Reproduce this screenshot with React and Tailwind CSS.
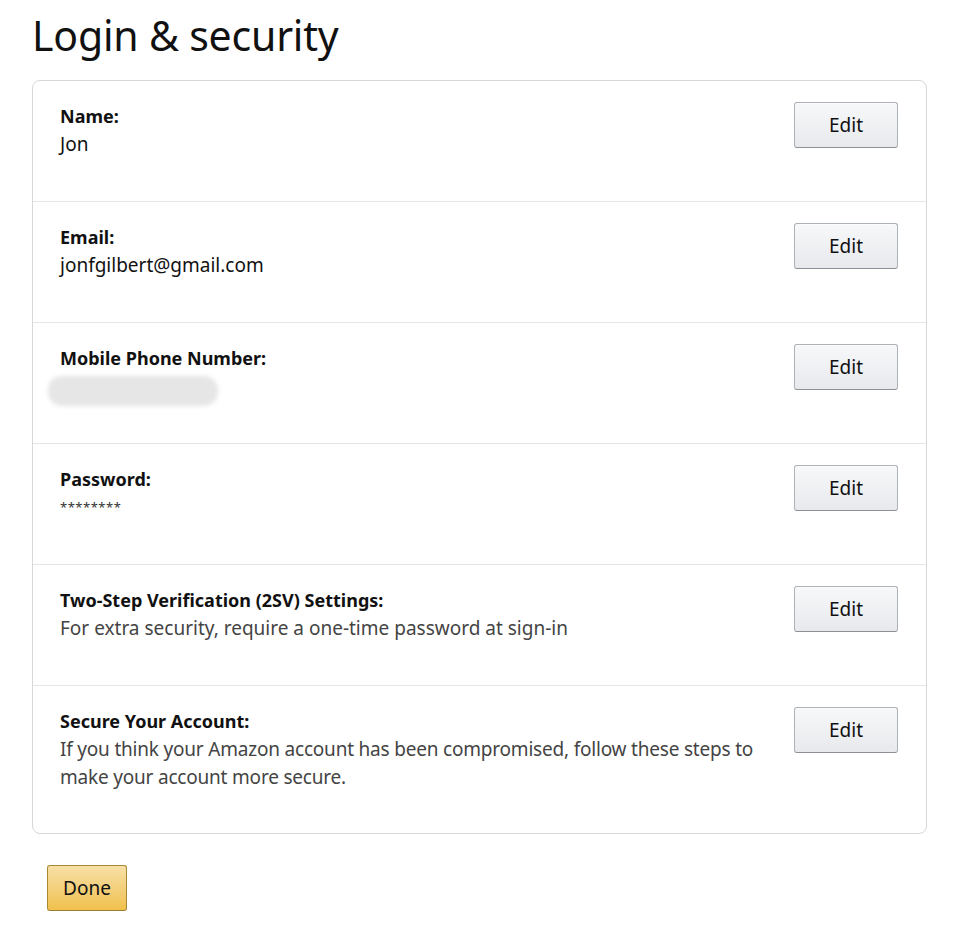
import React from "react";

const rows = [
  { label: "Name:", value: "Jon" },
  { label: "Email:", value: "jonfgilbert@gmail.com" },
  { label: "Mobile Phone Number:", blob: true },
  { label: "Password:", password: true },
  {
    label: "Two-Step Verification (2SV) Settings:",
    value: "For extra security, require a one-time password at sign-in",
    muted: true,
  },
  {
    label: "Secure Your Account:",
    value:
      "If you think your Amazon account has been compromised, follow these steps to make your account more secure.",
    muted: true,
    last: true,
  },
];

function EditButton() {
  return (
    <button className="shrink-0 w-[104px] h-[46px] rounded-[3px] border border-[#adb1b8] border-b-[#8d9096] bg-gradient-to-b from-[#f7f8fa] to-[#e7e9ec] text-[19px] text-[#111] shadow-[inset_0_1px_0_rgba(255,255,255,0.6)]">
      Edit
    </button>
  );
}

export default function App() {
  return (
    <div
      className="bg-white min-h-[939px] w-[960px] pl-[32px] pr-[33px] pt-[8px] text-[#111]"
      style={{ fontFamily: '"Noto Sans", "Open Sans", sans-serif' }}
    >
      <h1 className="text-[41px] leading-[54px] font-normal tracking-[-0.2px] mb-[18px]">
        Login &amp; security
      </h1>
      <div className="border border-[#d5d9d9] rounded-[8px]">
        {rows.map((r, i) => (
          <div
            key={i}
            className={
              "flex justify-between items-start pl-[27px] pr-[28px] pt-[21px] " +
              (r.last ? "pb-[42px] " : "pb-[43px] ") +
              (i > 0 ? "border-t border-[#e3e6e6]" : "")
            }
          >
            <div className="pr-[20px] max-w-[740px]">
              <div className="text-[18px] leading-[28px] font-bold">{r.label}</div>
              {r.value && (
                <div
                  className={
                    "text-[19px] leading-[28px] " +
                    (r.muted ? "text-[#444] " : "text-[#111] ") +
                    (r.last ? "tracking-[-0.2px]" : "")
                  }
                >
                  {r.value}
                </div>
              )}
              {r.blob && (
                <div className="h-[28px] relative">
                  <div className="absolute left-[-12px] top-[4px] w-[170px] h-[30px] rounded-[14px] bg-[#e6e6e6] blur-[2px]" />
                </div>
              )}
              {r.password && (
                <div className="text-[13px] leading-[28px] text-[#333] tracking-[0.5px]">
                  ********
                </div>
              )}
            </div>
            <EditButton />
          </div>
        ))}
      </div>
      <div className="pl-[15px] pt-[31px]">
        <button className="w-[80px] h-[46px] rounded-[3px] border border-[#a88734] border-b-[#9c7e31] bg-gradient-to-b from-[#f7dfa5] to-[#f0c14b] text-[19px] text-[#111]">
          Done
        </button>
      </div>
    </div>
  );
}
